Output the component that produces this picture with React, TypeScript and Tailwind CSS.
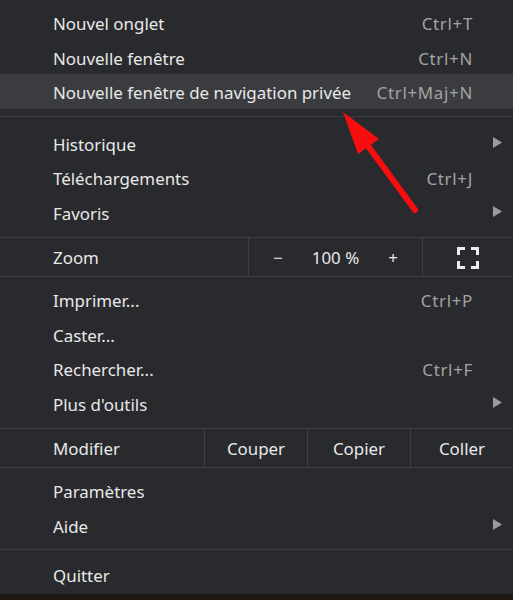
import React from "react";

type Item = {
  label: string;
  shortcut?: string;
  submenu?: boolean;
  active?: boolean;
};

const SubArrow = () => (
  <svg width="9" height="11" viewBox="0 0 9 11" className="block">
    <polygon points="0,0 9,5.5 0,11" fill="#9b9b9b" />
  </svg>
);

const Row: React.FC<{ item: Item }> = ({ item }) => (
  <div
    className={`h-[34.5px] flex items-center pl-[53px] ${
      item.active ? "bg-[#3b3c3f]" : ""
    }`}
  >
    <span className="flex-1 pt-[3px]">{item.label}</span>
    {item.shortcut && (
      <span className="pr-[40px] pt-[3px] tracking-[0.7px] text-[#a3a3a3]">
        {item.shortcut}
      </span>
    )}
    {item.submenu && (
      <span className="pr-[11px]">
        <SubArrow />
      </span>
    )}
  </div>
);

const Section: React.FC<{ items: Item[]; className?: string }> = ({
  items,
  className,
}) => (
  <div className={className}>
    {items.map((it) => (
      <Row key={it.label} item={it} />
    ))}
  </div>
);

const Separator = () => <div className="h-px bg-[#3e3f43]" />;

const App: React.FC = () => {
  return (
    <div
      className="relative w-[513px] h-[600px] bg-[#1d1813] overflow-hidden text-[16.9px] text-[#e8e8e8]"
      style={{ fontFamily: '"Noto Sans", "Open Sans", sans-serif' }}
    >
      <div className="h-[594px] bg-[#292a2d] flex flex-col">
        <Section
          className="pt-[5px] pb-[7px]"
          items={[
            { label: "Nouvel onglet", shortcut: "Ctrl+T" },
            { label: "Nouvelle fenêtre", shortcut: "Ctrl+N" },
            {
              label: "Nouvelle fenêtre de navigation privée",
              shortcut: "Ctrl+Maj+N",
              active: true,
            },
          ]}
        />
        <Separator />
        <Section
          className="pt-[9px] pb-[8px]"
          items={[
            { label: "Historique", submenu: true },
            { label: "Téléchargements", shortcut: "Ctrl+J" },
            { label: "Favoris", submenu: true },
          ]}
        />
        <Separator />
        {/* Zoom row */}
        <div className="h-[38px] flex items-stretch">
          <div className="flex-1 flex items-center pl-[53px] pt-[2px]">Zoom</div>
          <div className="w-[174px] border-l border-[#3e3f43] grid grid-cols-3 items-center text-center pt-[2px]">
            <span>−</span>
            <span>100 %</span>
            <span>+</span>
          </div>
          <div className="w-[91px] border-l border-[#3e3f43] flex items-center justify-center pt-[1px]">
            <svg width="22" height="22" viewBox="0 0 22 22" fill="none">
              <path
                d="M1.5 8V1.5H8M14 1.5H20.5V8M20.5 14V20.5H14M8 20.5H1.5V14"
                stroke="#ececec"
                strokeWidth="3"
              />
            </svg>
          </div>
        </div>
        <Separator />
        <Section
          className="pt-[5px] pb-[8px]"
          items={[
            { label: "Imprimer...", shortcut: "Ctrl+P" },
            { label: "Caster..." },
            { label: "Rechercher...", shortcut: "Ctrl+F" },
            { label: "Plus d'outils", submenu: true },
          ]}
        />
        <Separator />
        {/* Edit row */}
        <div className="h-[38px] flex items-stretch">
          <div className="flex-1 flex items-center pl-[53px] pt-[1px]">Modifier</div>
          <div className="w-[103px] border-l border-[#3e3f43] flex items-center justify-center pt-[1px]">
            Couper
          </div>
          <div className="w-[103px] border-l border-[#3e3f43] flex items-center justify-center pt-[1px]">
            Copier
          </div>
          <div className="w-[103px] border-l border-[#3e3f43] flex items-center justify-center pt-[1px]">
            Coller
          </div>
        </div>
        <Separator />
        <Section
          className="pt-[5px] pb-[7px]"
          items={[
            { label: "Paramètres" },
            { label: "Aide", submenu: true },
          ]}
        />
        <Separator />
        <Section className="pt-[7px]" items={[{ label: "Quitter" }]} />
      </div>

      {/* red annotation arrow */}
      <svg
        className="absolute left-0 top-0 pointer-events-none"
        width="513"
        height="600"
        viewBox="0 0 513 600"
      >
        <line
          x1="368"
          y1="146"
          x2="415"
          y2="210"
          stroke="#f70d0d"
          strokeWidth="6"
          strokeLinecap="round"
        />
        <polygon points="343,112 358,154 379,139" fill="#f70d0d" />
      </svg>
    </div>
  );
};

export default App;
